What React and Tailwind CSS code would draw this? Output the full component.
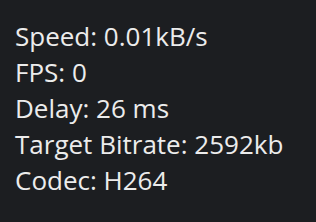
export default function App() {
    const lines = [
        'Speed: 0.01kB/s',
        'FPS: 0',
        'Delay: 26 ms',
        'Target Bitrate: 2592kb',
        'Codec: H264'
    ];

    return (
        <div className="w-[316px] h-[222px] bg-[#1c1e21] overflow-hidden">
            <div className="flex flex-col pt-[18px] pl-[15px] text-[26px] leading-[36px] text-[#ececec] font-['Open_Sans',sans-serif]">
                {lines.map((line) => (
                    <div key={line} className="whitespace-nowrap">{line}</div>
                ))}
            </div>
        </div>
    );
}
